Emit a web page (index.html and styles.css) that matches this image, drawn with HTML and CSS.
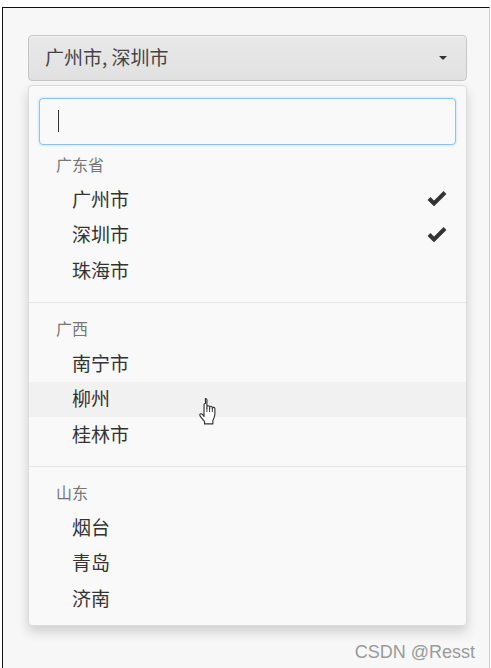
FILE: index.html
```html
<!DOCTYPE html>
<html lang="zh-CN">
<head>
    <meta charset="UTF-8">
    <meta name="viewport" content="width=device-width, initial-scale=1.0">
    <title>多选下拉框</title>
    <link rel="stylesheet" href="styles.css">
</head>
<body>

<div class="frame">
    <div class="select">
        <button class="select-toggle" type="button">
            <span class="select-text">广州市, 深圳市</span>
            <span class="caret"></span>
        </button>

        <div class="menu">
            <div class="search">
                <div class="search-box"><span class="cursor"></span></div>
            </div>

            <div class="group first">
                <div class="group-label">广东省</div>
                <ul class="items">
                    <li class="item selected"><span>广州市</span>
                        <svg class="check" width="20" height="16" viewBox="0 0 20 16"><path d="M2 8.5 L7 13.5 L18 2.5" fill="none" stroke="#333" stroke-width="4"/></svg>
                    </li>
                    <li class="item selected"><span>深圳市</span>
                        <svg class="check" width="20" height="16" viewBox="0 0 20 16"><path d="M2 8.5 L7 13.5 L18 2.5" fill="none" stroke="#333" stroke-width="4"/></svg>
                    </li>
                    <li class="item"><span>珠海市</span></li>
                </ul>
            </div>

            <div class="group">
                <div class="group-label">广西</div>
                <ul class="items">
                    <li class="item"><span>南宁市</span></li>
                    <li class="item hover"><span>柳州</span></li>
                    <li class="item"><span>桂林市</span></li>
                </ul>
            </div>

            <div class="group last">
                <div class="group-label">山东</div>
                <ul class="items">
                    <li class="item"><span>烟台</span></li>
                    <li class="item"><span>青岛</span></li>
                    <li class="item"><span>济南</span></li>
                </ul>
            </div>
        </div>
    </div>

    <!-- mouse pointer over 柳州 -->
    <svg class="pointer" width="22" height="29" viewBox="0 0 20 28">
        <path d="M6.5 1.5 c0.9 0 1.5 0.7 1.5 1.5 v8 v-1.3 c0-0.8 0.6-1.3 1.3-1.3 s1.3 0.5 1.3 1.3 v1.3 v-0.8 c0-0.8 0.6-1.3 1.3-1.3 s1.3 0.5 1.3 1.3 v1 c0-0.7 0.6-1.2 1.2-1.2 s1.3 0.5 1.3 1.2 v4.8 c0 3-0.9 5-2 7 v3 h-8 v-2.2 l-4.2-5.3 c-0.7-0.9-0.4-2 0.5-2.3 c0.6-0.2 1.2 0.1 1.6 0.6 l1.6 2 v-11.3 c0-0.8 0.6-1.5 1.5-1.5 z" fill="#fff" stroke="#333" stroke-width="1.1" stroke-linejoin="round"/>
        <path d="M10.6 11 v3.5 M13.2 11.3 v3.2 M8 11 v3.5" stroke="#333" stroke-width="0.9"/>
    </svg>

    <div class="watermark">CSDN @Resst</div>
</div>

</body>
</html>
```

FILE: styles.css
```css
html, body {
    margin: 0;
    background: #fff;
}
body {
    font-family: "Noto Sans CJK SC", "Noto Sans", sans-serif;
    color: #333;
}
.frame {
    position: relative;
    box-sizing: border-box;
    height: 661px;
    margin: 7px 1px 0 2px;
    padding: 27px 22px 0 25px;
    background: #f7f7f7;
    border-top: 1px solid #111;
    border-left: 1px solid #111;
    border-right: 1px solid #d0d0d0;
}
.select-toggle {
    display: flex;
    align-items: center;
    justify-content: space-between;
    box-sizing: border-box;
    width: 100%;
    height: 46px;
    padding: 0 19px 0 16px;
    font-family: "Noto Sans CJK SC", sans-serif;
    font-size: 19px;
    color: #444;
    background: linear-gradient(#e9e9e9, #e1e1e1);
    border: 1px solid #c6c6c6;
    border-radius: 4px;
    box-shadow: inset 0 1px 0 rgba(255, 255, 255, .5);
}
.select-text {
    line-height: 24px;
    margin-bottom: 2px;
}
.caret {
    width: 0;
    height: 0;
    border-left: 4px solid transparent;
    border-right: 4px solid transparent;
    border-top: 4px solid #333;
}
.menu {
    margin-top: 4px;
    background: #f9f9f9;
    border: 1px solid #dcdcdc;
    border-radius: 4px;
    box-shadow: 0 6px 12px rgba(0, 0, 0, .16);
    padding-bottom: 8px;
}
.search {
    padding: 12px 10px 0;
}
.search-box {
    box-sizing: border-box;
    height: 47px;
    background: #f9f9f9;
    border: 1px solid #8cc3ef;
    border-radius: 4px;
    box-shadow: 0 0 3px rgba(102, 175, 233, .45);
    padding: 11px 0 0 18px;
}
.cursor {
    display: block;
    width: 1px;
    height: 22px;
    background: #333;
}
.group {
    padding: 14px 0 13.5px;
    border-bottom: 1px solid #e6e6e6;
}
.group.first {
    padding-top: 8px;
}
.group.last {
    border-bottom: none;
    padding-bottom: 0;
}
.group-label {
    padding: 0 0 7px 27px;
    font-size: 16px;
    line-height: 22px;
    color: #777;
}
.items {
    list-style: none;
    margin: 0;
    padding: 0;
}
.item {
    display: flex;
    align-items: center;
    justify-content: space-between;
    height: 35.5px;
    padding: 0 19px 0 43px;
    font-size: 19px;
    line-height: 24px;
    color: #333;
}
.item span {
    margin-bottom: 2px;
}
.item.hover {
    background: #f1f1f1;
}
.check {
    display: block;
    margin-top: -3px;
}
.pointer {
    position: absolute;
    left: 195px;
    top: 389px;
}
.watermark {
    position: absolute;
    top: 634px;
    right: 14px;
    font-family: "Liberation Sans", Arial, sans-serif;
    font-size: 18px;
    line-height: 20px;
    color: #9a9a9a;
}
```
